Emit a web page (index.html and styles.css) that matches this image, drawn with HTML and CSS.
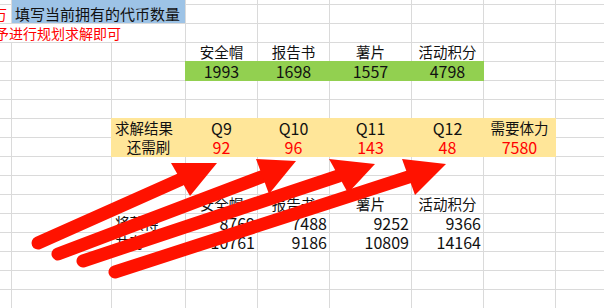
FILE: index.html
```html
<!DOCTYPE html>
<html lang="zh-CN">
<head>
<meta charset="utf-8">
<title>规划求解</title>
<link rel="stylesheet" href="styles.css">
</head>
<body>
<div class="sheet">
  <div class="fill blue"></div>
  <div class="fill green"></div>
  <div class="fill yellow"></div>

  <div class="c cA r1 red clipA">万</div>
  <div class="c title">填写当前拥有的代币数量</div>
  <div class="c note red">予进行规划求解即可</div>

  <div class="c cD r3 mid">安全帽</div>
  <div class="c cE r3 mid">报告书</div>
  <div class="c cF r3 mid">薯片</div>
  <div class="c cG r3 mid">活动积分</div>

  <div class="c cD r4 mid num">1993</div>
  <div class="c cE r4 mid num">1698</div>
  <div class="c cF r4 mid num">1557</div>
  <div class="c cG r4 mid num">4798</div>

  <div class="c cC r7 left">求解结果</div>
  <div class="c cD r7 mid num">Q9</div>
  <div class="c cE r7 mid num">Q10</div>
  <div class="c cF r7 mid num">Q11</div>
  <div class="c cG r7 mid num">Q12</div>
  <div class="c cH r7 mid">需要体力</div>

  <div class="c cC r8 mid">还需刷</div>
  <div class="c cD r8 mid num red">92</div>
  <div class="c cE r8 mid num red">96</div>
  <div class="c cF r8 mid num red">143</div>
  <div class="c cG r8 mid num red">48</div>
  <div class="c cH r8 mid num red">7580</div>

  <div class="c cD r11 mid">安全帽</div>
  <div class="c cE r11 mid">报告书</div>
  <div class="c cF r11 mid">薯片</div>
  <div class="c cG r11 mid">活动积分</div>

  <div class="c cC r12 left">将获得</div>
  <div class="c cD r12 right num">8769</div>
  <div class="c cE r12 right num">7488</div>
  <div class="c cF r12 right num">9252</div>
  <div class="c cG r12 right num">9366</div>

  <div class="c cC r13 left">共有</div>
  <div class="c cD r13 right num">10761</div>
  <div class="c cE r13 right num">9186</div>
  <div class="c cF r13 right num">10809</div>
  <div class="c cG r13 right num">14164</div>

  <svg class="arrows" width="604" height="308" viewBox="0 0 604 308" aria-hidden="true">
    <g fill="#ff1200" stroke="#ff1200" stroke-width="13" stroke-linecap="round">
      <line x1="38" y1="243" x2="180.5" y2="179.5"/>
      <line x1="58" y1="254" x2="262.5" y2="176.5"/>
      <line x1="83" y1="261" x2="338.5" y2="176"/>
      <line x1="115" y1="272" x2="408.5" y2="177"/>
    </g>
    <g fill="#ff1200">
      <polygon points="217,163 171,163 190,196"/>
      <polygon points="296,161 256,159 269,194"/>
      <polygon points="375,164 329,159 348,193"/>
      <polygon points="446,164 402,159 415,195"/>
    </g>
  </svg>
</div>
</body>
</html>
```
FILE: styles.css
```css
html, body {
  margin: 0;
  padding: 0;
  background: #ffffff;
  overflow: hidden;
}

.sheet {
  position: relative;
  width: 604px;
  height: 308px;
  overflow: hidden;
  display: grid;
  grid-template-columns: 11px 99px 73px 71px 71px 81px 71px 71px 48px;
  grid-template-rows: 4px repeat(16, 18px);
  gap: 1px;
  background-color: #ffffff;
  background-image:
    linear-gradient(#dadada, #dadada),
    linear-gradient(#dadada, #dadada),
    linear-gradient(#dadada, #dadada),
    linear-gradient(#dadada, #dadada),
    linear-gradient(#dadada, #dadada),
    linear-gradient(#dadada, #dadada),
    linear-gradient(#dadada, #dadada),
    linear-gradient(#dadada, #dadada),
    linear-gradient(to bottom, #dadada 1px, transparent 1px);
  background-size:
    1px 100%, 1px 100%, 1px 100%, 1px 100%,
    1px 100%, 1px 100%, 1px 100%, 1px 100%,
    100% 19px;
  background-position:
    11px 0, 111px 0, 185px 0, 257px 0,
    329px 0, 411px 0, 483px 0, 555px 0,
    0 4px;
  background-repeat:
    no-repeat, no-repeat, no-repeat, no-repeat,
    no-repeat, no-repeat, no-repeat, no-repeat,
    repeat-y;
  font-family: "Noto Sans CJK SC", "Noto Sans", sans-serif;
  font-size: 14.5px;
  line-height: 18px;
  color: #111111;
}

.fill { }
.blue {
  grid-column: 2 / 4;
  grid-row: 1 / 3;
  background: #9dc3e6;
}
.green {
  grid-column: 4 / 8;
  grid-row: 5 / 6;
  margin: -1px;
  background: #92d050;
}
.yellow {
  grid-column: 3 / 9;
  grid-row: 8 / 10;
  margin: -1px;
  background: #ffe699;
}

.c {
  white-space: nowrap;
  overflow: visible;
}

.cA { grid-column: 1; }
.cC { grid-column: 3; }
.cD { grid-column: 4; }
.cE { grid-column: 5; }
.cF { grid-column: 6; }
.cG { grid-column: 7; }
.cH { grid-column: 8; }

.r1 { grid-row: 2; }
.r3 { grid-row: 4; }
.r4 { grid-row: 5; }
.r7 { grid-row: 8; }
.r8 { grid-row: 9; }
.r11 { grid-row: 12; }
.r12 { grid-row: 13; }
.r13 { grid-row: 14; }

.mid { text-align: center; }
.left { text-align: left; padding-left: 3px; }
.right { text-align: right; padding-right: 2px; }

.num {
  font-family: "Liberation Sans Narrow", "Noto Sans CJK SC", sans-serif;
  font-size: 16px;
}

.red { color: #ff0000; }

.clipA {
  overflow: hidden;
  font-size: 14px;
  text-indent: -7px;
}

.title {
  grid-column: 2 / 4;
  grid-row: 2;
  padding-left: 3px;
  font-size: 15px;
}

.note {
  grid-column: 1 / 4;
  grid-row: 3;
  background: #ffffff;
  overflow: hidden;
  font-size: 14px;
  text-indent: -5px;
}

.arrows {
  position: absolute;
  left: 0;
  top: 0;
  pointer-events: none;
}
```
